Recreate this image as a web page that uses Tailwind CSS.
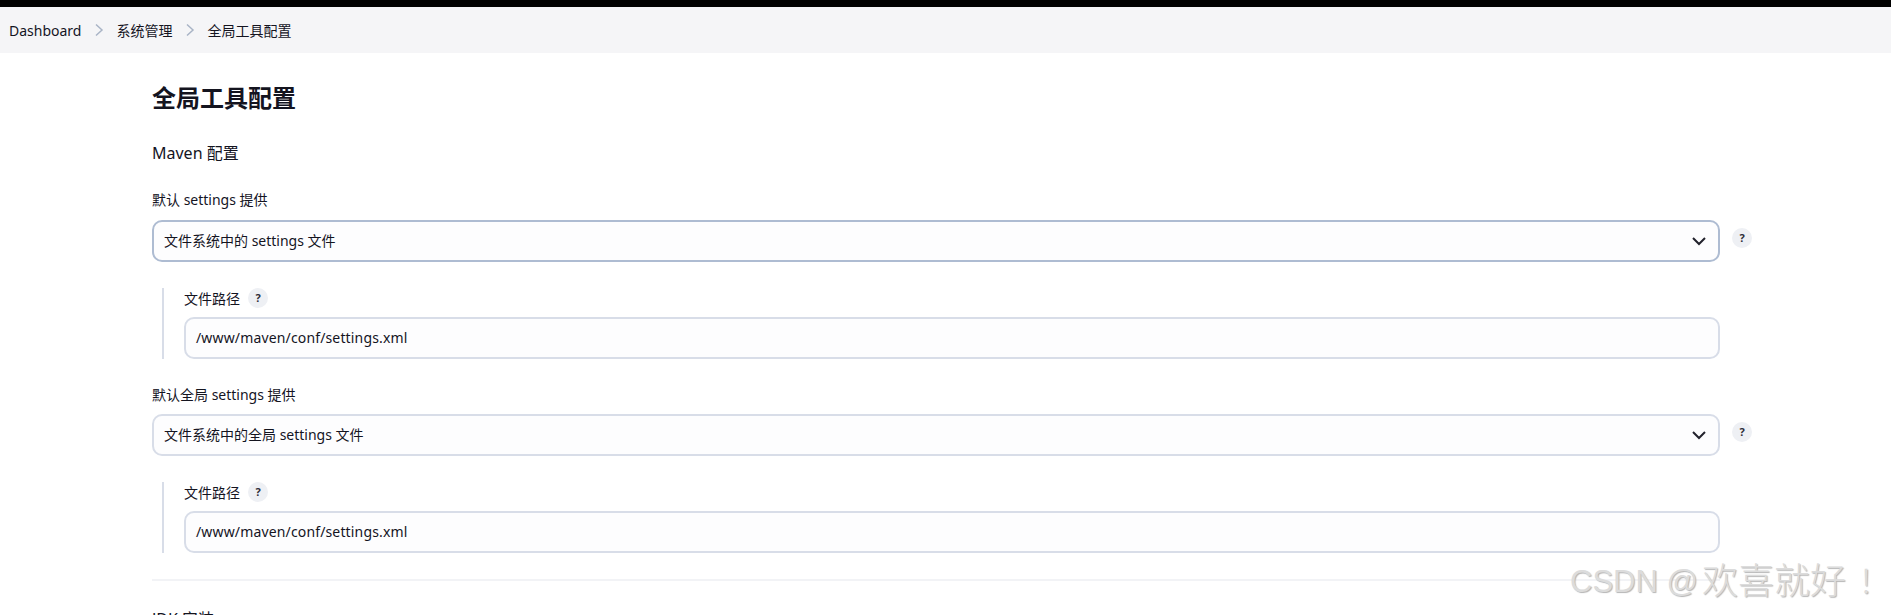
<!DOCTYPE html>
<html lang="zh">
<head>
    <meta charset="UTF-8">
    <meta name="viewport" content="width=device-width, initial-scale=1.0">
    <title>全局工具配置</title>
    <script src="https://cdn.jsdelivr.net/npm/@tailwindcss/browser@4"></script>
</head>
<body class="bg-white overflow-hidden h-[615px] relative font-['Noto_Sans','Noto_Sans_CJK_SC',sans-serif] text-[#14141f]">

    <div class="h-[7px] bg-black"></div>

    <!-- Breadcrumb -->
    <nav class="h-[46px] bg-[#f5f5f7] flex items-center pl-[9px] text-[14px]">
        <span>Dashboard</span>
        <svg class="w-[10px] h-[14px] ml-[13px] mr-[12px]" viewBox="0 0 10 14" fill="none" stroke="#a9b4c6" stroke-width="1.5"><path d="M2 1.5 L8 7 L2 12.5"/></svg>
        <span>系统管理</span>
        <svg class="w-[10px] h-[14px] ml-[13px] mr-[12px]" viewBox="0 0 10 14" fill="none" stroke="#a9b4c6" stroke-width="1.5"><path d="M2 1.5 L8 7 L2 12.5"/></svg>
        <span>全局工具配置</span>
    </nav>

    <main class="pl-[152px] w-[1720px]">
        <h1 class="text-[24px] font-bold leading-[32px] mt-[29px]">全局工具配置</h1>
        <h2 class="text-[16px] leading-[24px] mt-[27px]">Maven 配置</h2>

        <!-- settings -->
        <label class="block text-[14px] leading-[20px] mt-[25px]">默认 settings 提供</label>
        <div class="relative mt-[10px]">
            <div class="h-[42px] rounded-[10px] border-2 border-[#aebcd2] bg-[#fdfdfe] flex items-center justify-between pl-[10px] pr-[12px] text-[14px]">
                <span class="mb-[2px]">文件系统中的 settings 文件</span>
                <svg class="w-[14px] h-[10px]" viewBox="0 0 14 10" fill="none" stroke="#22222c" stroke-width="2"><path d="M1 2 L7 8 L13 2"/></svg>
            </div>
            <span class="absolute left-[1580px] top-[8px] w-[20px] h-[20px] rounded-full bg-[#eef0f4] flex items-center justify-center text-[11px] font-bold text-[#2d2d37]">?</span>
        </div>
        <div class="mt-[26px] ml-[10px] border-l-2 border-[#d8dde8] pl-[20px] h-[71px]">
            <div class="flex items-center h-[20px] text-[14px]">
                <span>文件路径</span>
                <span class="ml-[8px] w-[20px] h-[20px] rounded-full bg-[#eef0f4] flex items-center justify-center text-[11px] font-bold text-[#2d2d37]">?</span>
            </div>
            <div class="mt-[9px] h-[42px] rounded-[10px] border-2 border-[#d8dde8] bg-[#fdfdfe] flex items-center pl-[10px] pb-[2px] text-[14px] tracking-[0.15px]">/www/maven/conf/settings.xml</div>
        </div>

        <!-- global settings -->
        <label class="block text-[14px] leading-[20px] mt-[26px]">默认全局 settings 提供</label>
        <div class="relative mt-[9px]">
            <div class="h-[42px] rounded-[10px] border-2 border-[#d8dde8] bg-[#fdfdfe] flex items-center justify-between pl-[10px] pr-[12px] text-[14px]">
                <span class="mb-[2px]">文件系统中的全局 settings 文件</span>
                <svg class="w-[14px] h-[10px]" viewBox="0 0 14 10" fill="none" stroke="#22222c" stroke-width="2"><path d="M1 2 L7 8 L13 2"/></svg>
            </div>
            <span class="absolute left-[1580px] top-[8px] w-[20px] h-[20px] rounded-full bg-[#eef0f4] flex items-center justify-center text-[11px] font-bold text-[#2d2d37]">?</span>
        </div>
        <div class="mt-[26px] ml-[10px] border-l-2 border-[#d8dde8] pl-[20px] h-[71px]">
            <div class="flex items-center h-[20px] text-[14px]">
                <span>文件路径</span>
                <span class="ml-[8px] w-[20px] h-[20px] rounded-full bg-[#eef0f4] flex items-center justify-center text-[11px] font-bold text-[#2d2d37]">?</span>
            </div>
            <div class="mt-[9px] h-[42px] rounded-[10px] border-2 border-[#d8dde8] bg-[#fdfdfe] flex items-center pl-[10px] pb-[2px] text-[14px] tracking-[0.15px]">/www/maven/conf/settings.xml</div>
        </div>

        <div class="mt-[26px] h-[2px] bg-[#f2f3f6]"></div>
        <h2 class="text-[16px] leading-[24px] mt-[26px]">JDK 安装</h2>
    </main>

    <!-- Watermark -->
    <div class="absolute left-[1570px] top-[558px] flex items-center h-[48px] whitespace-nowrap text-[#dcdcdc] [text-shadow:1px_1px_1px_#b5b5b5] font-['Liberation_Sans','Noto_Sans_CJK_SC',sans-serif]">
        <span class="text-[31px]">CSDN @</span><span class="text-[36px] font-light ml-[4px]">欢喜就好</span><span class="text-[32px] font-light ml-[12px]">！</span>
    </div>

</body>
</html>
